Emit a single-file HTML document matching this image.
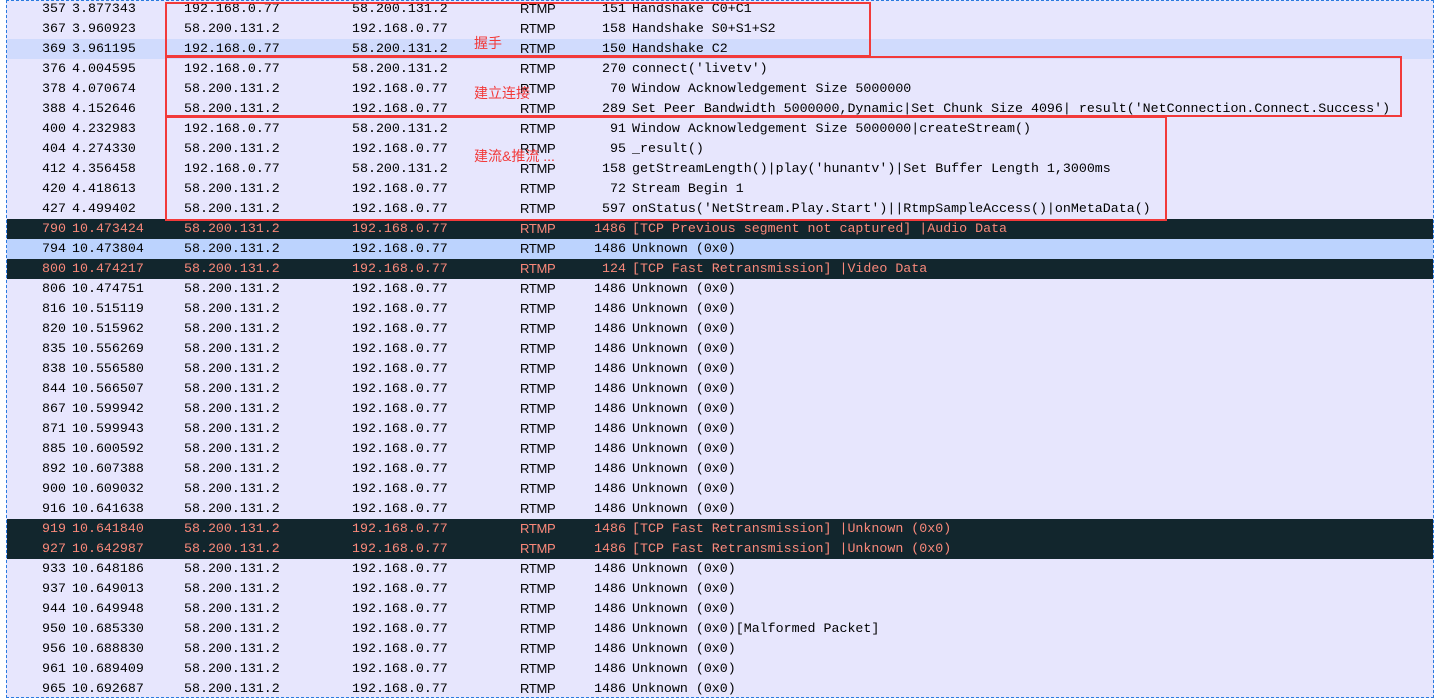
<!DOCTYPE html>
<html><head><meta charset="utf-8"><style>
body{margin:0;width:1437px;height:700px;overflow:hidden;background:#fff;position:relative;font-family:"Liberation Mono","DejaVu Sans Mono",monospace;font-size:13.3px;}
#bg{position:absolute;left:6px;top:0;width:1428px;height:698px;background:#e7e6fd;border:1px dashed #2a7be0;box-sizing:border-box;}
#rows{position:absolute;left:0;top:1px;width:1437px;height:699px;}
.r{position:absolute;left:7px;width:1426px;height:20px;line-height:20px;color:#000;white-space:pre;}
.r span{position:absolute;top:0;}
.n{width:59px;left:0;text-align:right}
.t{left:65px}.s{left:177px}.d{left:345px}.p{left:513px;font-family:"Liberation Sans",sans-serif;font-size:13px;letter-spacing:-0.3px}
.l{left:560px;width:59px;text-align:right}.i{left:625px}
.dk{background:#12262d;color:#f9897b}
.sel{background:#bcd3fe}
.hl{background:#d0dbfd}
.box{position:absolute;border:2px solid #f23a3a;box-sizing:border-box}
.lab{position:absolute;color:#f23a3a;font-family:"Liberation Sans","Noto Sans CJK SC",sans-serif;font-size:14px}
</style></head><body>
<div id="bg"></div>
<div id="rows">
<div class="r" style="top:-2px"><span class="n">357</span><span class="t">3.877343</span><span class="s">192.168.0.77</span><span class="d">58.200.131.2</span><span class="p">RTMP</span><span class="l">151</span><span class="i">Handshake C0+C1</span></div>
<div class="r" style="top:18px"><span class="n">367</span><span class="t">3.960923</span><span class="s">58.200.131.2</span><span class="d">192.168.0.77</span><span class="p">RTMP</span><span class="l">158</span><span class="i">Handshake S0+S1+S2</span></div>
<div class="r hl" style="top:38px"><span class="n">369</span><span class="t">3.961195</span><span class="s">192.168.0.77</span><span class="d">58.200.131.2</span><span class="p">RTMP</span><span class="l">150</span><span class="i">Handshake C2</span></div>
<div class="r" style="top:58px"><span class="n">376</span><span class="t">4.004595</span><span class="s">192.168.0.77</span><span class="d">58.200.131.2</span><span class="p">RTMP</span><span class="l">270</span><span class="i">connect('livetv')</span></div>
<div class="r" style="top:78px"><span class="n">378</span><span class="t">4.070674</span><span class="s">58.200.131.2</span><span class="d">192.168.0.77</span><span class="p">RTMP</span><span class="l">70</span><span class="i">Window Acknowledgement Size 5000000</span></div>
<div class="r" style="top:98px"><span class="n">388</span><span class="t">4.152646</span><span class="s">58.200.131.2</span><span class="d">192.168.0.77</span><span class="p">RTMP</span><span class="l">289</span><span class="i">Set Peer Bandwidth 5000000,Dynamic|Set Chunk Size 4096| result('NetConnection.Connect.Success')</span></div>
<div class="r" style="top:118px"><span class="n">400</span><span class="t">4.232983</span><span class="s">192.168.0.77</span><span class="d">58.200.131.2</span><span class="p">RTMP</span><span class="l">91</span><span class="i">Window Acknowledgement Size 5000000|createStream()</span></div>
<div class="r" style="top:138px"><span class="n">404</span><span class="t">4.274330</span><span class="s">58.200.131.2</span><span class="d">192.168.0.77</span><span class="p">RTMP</span><span class="l">95</span><span class="i">_result()</span></div>
<div class="r" style="top:158px"><span class="n">412</span><span class="t">4.356458</span><span class="s">192.168.0.77</span><span class="d">58.200.131.2</span><span class="p">RTMP</span><span class="l">158</span><span class="i">getStreamLength()|play('hunantv')|Set Buffer Length 1,3000ms</span></div>
<div class="r" style="top:178px"><span class="n">420</span><span class="t">4.418613</span><span class="s">58.200.131.2</span><span class="d">192.168.0.77</span><span class="p">RTMP</span><span class="l">72</span><span class="i">Stream Begin 1</span></div>
<div class="r" style="top:198px"><span class="n">427</span><span class="t">4.499402</span><span class="s">58.200.131.2</span><span class="d">192.168.0.77</span><span class="p">RTMP</span><span class="l">597</span><span class="i">onStatus('NetStream.Play.Start')||RtmpSampleAccess()|onMetaData()</span></div>
<div class="r dk" style="top:218px"><span class="n">790</span><span class="t">10.473424</span><span class="s">58.200.131.2</span><span class="d">192.168.0.77</span><span class="p">RTMP</span><span class="l">1486</span><span class="i">[TCP Previous segment not captured] |Audio Data</span></div>
<div class="r sel" style="top:238px"><span class="n">794</span><span class="t">10.473804</span><span class="s">58.200.131.2</span><span class="d">192.168.0.77</span><span class="p">RTMP</span><span class="l">1486</span><span class="i">Unknown (0x0)</span></div>
<div class="r dk" style="top:258px"><span class="n">800</span><span class="t">10.474217</span><span class="s">58.200.131.2</span><span class="d">192.168.0.77</span><span class="p">RTMP</span><span class="l">124</span><span class="i">[TCP Fast Retransmission] |Video Data</span></div>
<div class="r" style="top:278px"><span class="n">806</span><span class="t">10.474751</span><span class="s">58.200.131.2</span><span class="d">192.168.0.77</span><span class="p">RTMP</span><span class="l">1486</span><span class="i">Unknown (0x0)</span></div>
<div class="r" style="top:298px"><span class="n">816</span><span class="t">10.515119</span><span class="s">58.200.131.2</span><span class="d">192.168.0.77</span><span class="p">RTMP</span><span class="l">1486</span><span class="i">Unknown (0x0)</span></div>
<div class="r" style="top:318px"><span class="n">820</span><span class="t">10.515962</span><span class="s">58.200.131.2</span><span class="d">192.168.0.77</span><span class="p">RTMP</span><span class="l">1486</span><span class="i">Unknown (0x0)</span></div>
<div class="r" style="top:338px"><span class="n">835</span><span class="t">10.556269</span><span class="s">58.200.131.2</span><span class="d">192.168.0.77</span><span class="p">RTMP</span><span class="l">1486</span><span class="i">Unknown (0x0)</span></div>
<div class="r" style="top:358px"><span class="n">838</span><span class="t">10.556580</span><span class="s">58.200.131.2</span><span class="d">192.168.0.77</span><span class="p">RTMP</span><span class="l">1486</span><span class="i">Unknown (0x0)</span></div>
<div class="r" style="top:378px"><span class="n">844</span><span class="t">10.566507</span><span class="s">58.200.131.2</span><span class="d">192.168.0.77</span><span class="p">RTMP</span><span class="l">1486</span><span class="i">Unknown (0x0)</span></div>
<div class="r" style="top:398px"><span class="n">867</span><span class="t">10.599942</span><span class="s">58.200.131.2</span><span class="d">192.168.0.77</span><span class="p">RTMP</span><span class="l">1486</span><span class="i">Unknown (0x0)</span></div>
<div class="r" style="top:418px"><span class="n">871</span><span class="t">10.599943</span><span class="s">58.200.131.2</span><span class="d">192.168.0.77</span><span class="p">RTMP</span><span class="l">1486</span><span class="i">Unknown (0x0)</span></div>
<div class="r" style="top:438px"><span class="n">885</span><span class="t">10.600592</span><span class="s">58.200.131.2</span><span class="d">192.168.0.77</span><span class="p">RTMP</span><span class="l">1486</span><span class="i">Unknown (0x0)</span></div>
<div class="r" style="top:458px"><span class="n">892</span><span class="t">10.607388</span><span class="s">58.200.131.2</span><span class="d">192.168.0.77</span><span class="p">RTMP</span><span class="l">1486</span><span class="i">Unknown (0x0)</span></div>
<div class="r" style="top:478px"><span class="n">900</span><span class="t">10.609032</span><span class="s">58.200.131.2</span><span class="d">192.168.0.77</span><span class="p">RTMP</span><span class="l">1486</span><span class="i">Unknown (0x0)</span></div>
<div class="r" style="top:498px"><span class="n">916</span><span class="t">10.641638</span><span class="s">58.200.131.2</span><span class="d">192.168.0.77</span><span class="p">RTMP</span><span class="l">1486</span><span class="i">Unknown (0x0)</span></div>
<div class="r dk" style="top:518px"><span class="n">919</span><span class="t">10.641840</span><span class="s">58.200.131.2</span><span class="d">192.168.0.77</span><span class="p">RTMP</span><span class="l">1486</span><span class="i">[TCP Fast Retransmission] |Unknown (0x0)</span></div>
<div class="r dk" style="top:538px"><span class="n">927</span><span class="t">10.642987</span><span class="s">58.200.131.2</span><span class="d">192.168.0.77</span><span class="p">RTMP</span><span class="l">1486</span><span class="i">[TCP Fast Retransmission] |Unknown (0x0)</span></div>
<div class="r" style="top:558px"><span class="n">933</span><span class="t">10.648186</span><span class="s">58.200.131.2</span><span class="d">192.168.0.77</span><span class="p">RTMP</span><span class="l">1486</span><span class="i">Unknown (0x0)</span></div>
<div class="r" style="top:578px"><span class="n">937</span><span class="t">10.649013</span><span class="s">58.200.131.2</span><span class="d">192.168.0.77</span><span class="p">RTMP</span><span class="l">1486</span><span class="i">Unknown (0x0)</span></div>
<div class="r" style="top:598px"><span class="n">944</span><span class="t">10.649948</span><span class="s">58.200.131.2</span><span class="d">192.168.0.77</span><span class="p">RTMP</span><span class="l">1486</span><span class="i">Unknown (0x0)</span></div>
<div class="r" style="top:618px"><span class="n">950</span><span class="t">10.685330</span><span class="s">58.200.131.2</span><span class="d">192.168.0.77</span><span class="p">RTMP</span><span class="l">1486</span><span class="i">Unknown (0x0)[Malformed Packet]</span></div>
<div class="r" style="top:638px"><span class="n">956</span><span class="t">10.688830</span><span class="s">58.200.131.2</span><span class="d">192.168.0.77</span><span class="p">RTMP</span><span class="l">1486</span><span class="i">Unknown (0x0)</span></div>
<div class="r" style="top:658px"><span class="n">961</span><span class="t">10.689409</span><span class="s">58.200.131.2</span><span class="d">192.168.0.77</span><span class="p">RTMP</span><span class="l">1486</span><span class="i">Unknown (0x0)</span></div>
<div class="r" style="top:678px"><span class="n">965</span><span class="t">10.692687</span><span class="s">58.200.131.2</span><span class="d">192.168.0.77</span><span class="p">RTMP</span><span class="l">1486</span><span class="i">Unknown (0x0)</span></div>
</div>
<div style="position:absolute;left:6px;top:697px;width:1428px;border-top:1px dashed #2a7be0"></div>
<div class="box" style="left:165px;top:2px;width:706px;height:55px"></div>
<div class="box" style="left:165px;top:56px;width:1237px;height:61px"></div>
<div class="box" style="left:165px;top:116px;width:1002px;height:105px"></div>
<div class="lab" style="left:474px;top:33px">握手</div>
<div class="lab" style="left:474px;top:83px">建立连接</div>
<div class="lab" style="left:474px;top:146px">建流&amp;推流 ...</div>
</body></html>
